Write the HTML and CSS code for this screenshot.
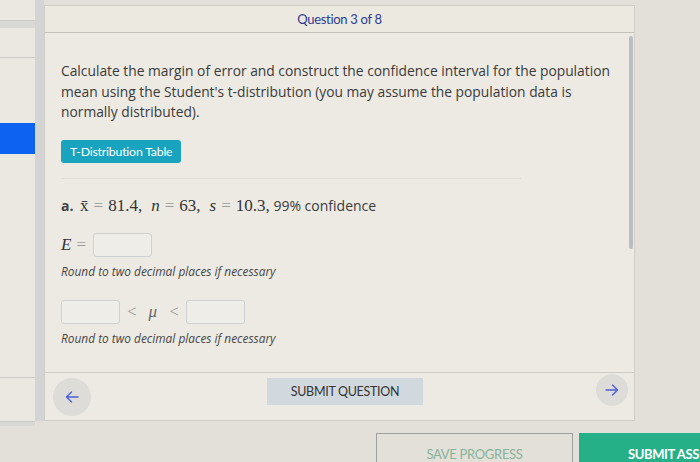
FILE: index.html
```html
<!DOCTYPE html>
<html>
<head>
<meta charset="utf-8">
<link rel="stylesheet" href="styles.css">
</head>
<body>
<div class="page">
  <div class="layout">
    <aside class="sidebar">
      <div class="nav-item nav-first"></div>
      <div class="nav-item nav-second"></div>
      <div class="nav-item nav-plain"></div>
      <div class="nav-item nav-active"></div>
      <div class="nav-item nav-long"></div>
      <div class="nav-item nav-last"></div>
    </aside>
    <div class="rail"></div>
    <main class="panel">
      <header class="panel-head">Question 3 of 8</header>
      <section class="panel-body">
        <div class="content">
          <p class="prompt">Calculate the margin of error and construct the confidence interval for the population mean using the Student's t-distribution (you may assume the population data is normally distributed).</p>
          <button class="table-btn">T-Distribution Table</button>
          <hr class="divider">
          <p class="part"><b class="part-label">a.</b> <span class="math">x̄<span class="eq">=</span>81.4,<span class="sp"></span><i>n</i><span class="eq">=</span>63,<span class="sp"></span><i>s</i><span class="eq">=</span>10.3,</span> 99% confidence</p>
          <div class="answer-row">
            <span class="math"><i>E</i><span class="eq">=</span></span>
            <span class="box"></span>
          </div>
          <p class="hint">Round to two decimal places if necessary</p>
          <div class="answer-row interval">
            <span class="box"></span>
            <span class="math lt">&lt;<i>μ</i>&lt;</span>
            <span class="box"></span>
          </div>
          <p class="hint">Round to two decimal places if necessary</p>
        </div>
        <div class="scrollbar"></div>
      </section>
      <footer class="panel-foot">
        <span class="circle-btn left-btn">
          <svg width="16" height="16" viewBox="0 0 16 16"><path d="M14 8H2.5M7.5 3L2.5 8l5 5" fill="none" stroke="#4b5fd6" stroke-width="1.4" stroke-linecap="round" stroke-linejoin="round"/></svg>
        </span>
        <button class="submit-q">SUBMIT QUESTION</button>
        <span class="circle-btn right-btn">
          <svg width="16" height="16" viewBox="0 0 16 16"><path d="M2 8h11.5M8.5 3l5 5-5 5" fill="none" stroke="#4b5fd6" stroke-width="1.4" stroke-linecap="round" stroke-linejoin="round"/></svg>
        </span>
      </footer>
    </main>
  </div>
  <div class="actions">
    <button class="save-btn">SAVE PROGRESS</button>
    <button class="submit-all">SUBMIT ASSIGNMENT</button>
  </div>
</div>
</body>
</html>
```
FILE: styles.css
```css
* { box-sizing: border-box; }
html, body { margin: 0; padding: 0; }
body {
  width: 700px;
  height: 462px;
  overflow: hidden;
  background: #e3e0d9;
  font-family: "Open Sans", "DejaVu Sans", sans-serif;
  color: #3b3b3b;
}
.page { width: 700px; height: 462px; display: flex; flex-direction: column; }
.layout { display: flex; height: 426px; flex-shrink: 0; }

.sidebar { width: 35px; display: flex; flex-direction: column; background: #d9d8d4; }
.nav-item { background: #ebe8e1; border-bottom: 1px solid #cbcac6; }
.nav-first { height: 21px; margin-bottom: 7px; }
.nav-second { height: 30px; }
.nav-plain { height: 65px; border-bottom: none; }
.nav-active { height: 31px; background: #0d62f2; border-bottom: none; width: 36px; }
.nav-long { height: 224px; }
.nav-last { height: 44px; }

.rail { width: 9px; background: #d3d4d3; height: 421px; }

.panel {
  width: 591px;
  margin-top: 5px;
  height: 416px;
  border: 1px solid #d0cec8;
  background: #edeae3;
  display: flex;
  flex-direction: column;
}
.panel-head {
  height: 27px;
  flex-shrink: 0;
  border-bottom: 1px solid #c4c2bc;
  display: flex; align-items: center; justify-content: center;
  font-family: Lato, "Open Sans", sans-serif;
  font-size: 13px;
  letter-spacing: -0.3px;
  color: #2c3b94;
  background: #ece9e1;
}
.panel-body { flex: 1; display: flex; border-bottom: 1px solid #cdcbc5; padding: 3px 1px 0 16px; }
.content { flex: 1; padding-top: 25px; }
.scrollbar { width: 4px; height: 213px; background: #b9bdbe; border-radius: 2px; }

.prompt {
  margin: 0;
  font-size: 13.8px;
  line-height: 20.5px;
  color: #3a3a3a;
  width: 560px;
}
.table-btn {
  margin-top: 17px;
  height: 23px;
  padding: 0 9px;
  border: none;
  border-radius: 3px;
  background: #18a3bf;
  color: #fff;
  font-family: Lato, "Open Sans", sans-serif;
  font-size: 12.3px;
  letter-spacing: -0.2px;
  display: block;
}
.divider { margin: 15px 0 0; width: 460px; border: none; border-top: 1px solid #e0ddd5; }
.part { margin: 17px 0 0; font-size: 14px; }
.part-label { font-weight: 700; color: #444; margin-right: 3px; }
.math { font-family: "Liberation Serif", "DejaVu Serif", serif; font-size: 17px; color: #333; }
.eq { color: #9a9a9a; margin: 0 5px; }
.sp { display: inline-block; width: 9px; }
.answer-row { display: flex; align-items: center; gap: 2px; margin-top: 17px; }
.box { width: 59px; height: 24px; border: 1px solid #cfd0d0; border-radius: 3px; background: #efede8; }
.hint { margin: 6px 0 0; font-size: 11.9px; font-style: italic; color: #474747; }
.interval { margin-top: 21px; gap: 7px; }
.lt { color: #9a9a9a; }
.lt i { color: #666; margin: 0 12px; }

.panel-foot { height: 47px; flex-shrink: 0; display: flex; align-items: center; padding: 0 0 0 8px; }
.circle-btn {
  border-radius: 50%;
  background: #dedcd8;
  display: flex; align-items: center; justify-content: center;
  flex-shrink: 0;
}
.left-btn { width: 38px; height: 38px; }
.right-btn { width: 32px; height: 32px; margin-left: 173px; margin-top: -13px; }
.submit-q {
  margin-left: 176px;
  margin-top: -10px;
  width: 156px; height: 27px;
  flex-shrink: 0;
  border: none;
  background: #d2d9de;
  font-family: Lato, "Open Sans", sans-serif;
  font-size: 12.5px;
  color: #333;
  letter-spacing: -0.3px;
}

.actions { display: flex; justify-content: flex-end; gap: 6px; padding-top: 7px; margin-right: -80px; }
.save-btn {
  width: 197px; height: 34px;
  border: 1px solid #9ea09e;
  background: transparent;
  color: #86b49a;
  font-family: Lato, "Open Sans", sans-serif;
  font-size: 13px;
  letter-spacing: -0.3px;
  padding-top: 8px;
}
.submit-all {
  width: 201px; height: 34px;
  border: none;
  background: #25b088;
  color: #fff;
  font-family: Lato, "Open Sans", sans-serif;
  font-size: 13px;
  font-weight: 700;
  letter-spacing: -0.4px;
  text-align: left;
  padding: 8px 0 0 49px;
}
```
